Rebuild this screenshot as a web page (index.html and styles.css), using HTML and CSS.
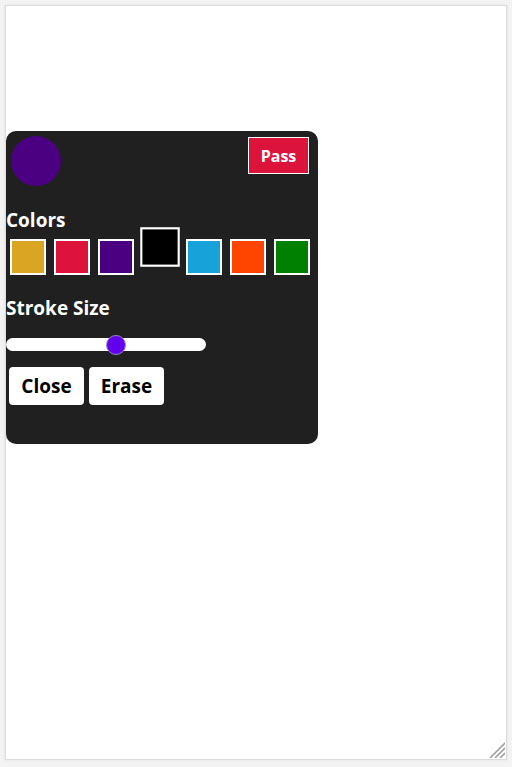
FILE: index.html
```html
<!DOCTYPE html>
<html lang="en">
<head>
  <meta charset="UTF-8" />
  <title>Draw</title>
  <meta name="viewport" content="width=device-width, initial-scale=1.0" />
  <link rel="stylesheet" href="styles.css">
</head>
<body>

  <div class="frame">
    <!-- TOOL PANEL -->
    <div class="panel">
      <div class="panel-head">
        <div class="current-color"></div>
        <button class="pass-btn">Pass</button>
      </div>

      <h3>Colors</h3>
      <div class="swatches">
        <div class="swatch" style="background:#daa520"></div>
        <div class="swatch" style="background:#dc143c"></div>
        <div class="swatch" style="background:#4b0082"></div>
        <div class="swatch selected" style="background:#000"></div>
        <div class="swatch" style="background:#17a2da"></div>
        <div class="swatch" style="background:#ff4500"></div>
        <div class="swatch" style="background:#008000"></div>
      </div>

      <h3>Stroke Size</h3>
      <input type="range" class="stroke" min="1" max="10" value="6" />

      <div class="actions">
        <button class="action-btn">Close</button>
        <button class="action-btn">Erase</button>
      </div>
    </div>

    <svg class="grip" width="16" height="16" viewBox="0 0 16 16">
      <path d="M1 16 L16 1 M6 16 L16 6 M11 16 L16 11" stroke="#a0a0a0" stroke-width="1.6" fill="none" />
    </svg>
  </div>

</body>
</html>
```

FILE: styles.css
```css
body {
  margin: 0;
  padding: 5px;
  background-color: #f3f3f3;
  font-family: "Open Sans", sans-serif;
}
.frame {
  position: relative;
  width: 500px;
  height: 753px;
  background: #fff;
  border: 1px solid #dcdcdc;
  box-shadow: 0 0 3px rgba(0, 0, 0, 0.08);
}
.grip {
  position: absolute;
  right: 1px;
  bottom: 1px;
}
.panel {
  width: 312px;
  height: 313px;
  box-sizing: border-box;
  margin-top: 125px;
  background-color: #202020;
  border-radius: 10px;
  color: #fff;
}
.panel-head {
  display: flex;
  justify-content: space-between;
  align-items: flex-start;
  padding: 5px 9px 0 5px;
}
.current-color {
  width: 50px;
  height: 50px;
  border-radius: 50%;
  background: #4b0082;
}
.pass-btn {
  margin-top: 1px;
  width: 61px;
  height: 37px;
  background: #dc143c;
  color: #fff;
  border: 1px solid #fff;
  font-family: inherit;
  font-weight: bold;
  font-size: 16px;
  padding: 0;
}
h3 {
  margin: 0;
  font-size: 19px;
  line-height: 24px;
  font-weight: bold;
}
.panel-head + h3 {
  margin-top: 22px;
}
.swatches {
  display: flex;
  margin-top: 3px;
}
.swatch {
  width: 32px;
  height: 32px;
  margin: 4px;
  border: 2px solid #fff;
}
.swatch.selected {
  transform: translateY(-10px) scale(1.1);
}
.swatches + h3 {
  margin-top: 17px;
}
.stroke {
  -webkit-appearance: none;
  appearance: none;
  display: block;
  width: 200px;
  height: 13px;
  margin: 18px 0 0 0;
  background: #fff;
  border-radius: 7px;
  outline: none;
}
.stroke::-webkit-slider-thumb {
  -webkit-appearance: none;
  width: 20px;
  height: 20px;
  border-radius: 50%;
  background: #6200ee;
  border: 1px solid #9a86c8;
  box-sizing: border-box;
}
.actions {
  display: flex;
  gap: 5px;
  padding-left: 3px;
  margin-top: 16px;
}
.action-btn {
  width: 75px;
  height: 38px;
  background: #fff;
  color: #000;
  border: none;
  border-radius: 4px;
  font-family: inherit;
  font-size: 19px;
  font-weight: bold;
  padding: 0;
}
```
